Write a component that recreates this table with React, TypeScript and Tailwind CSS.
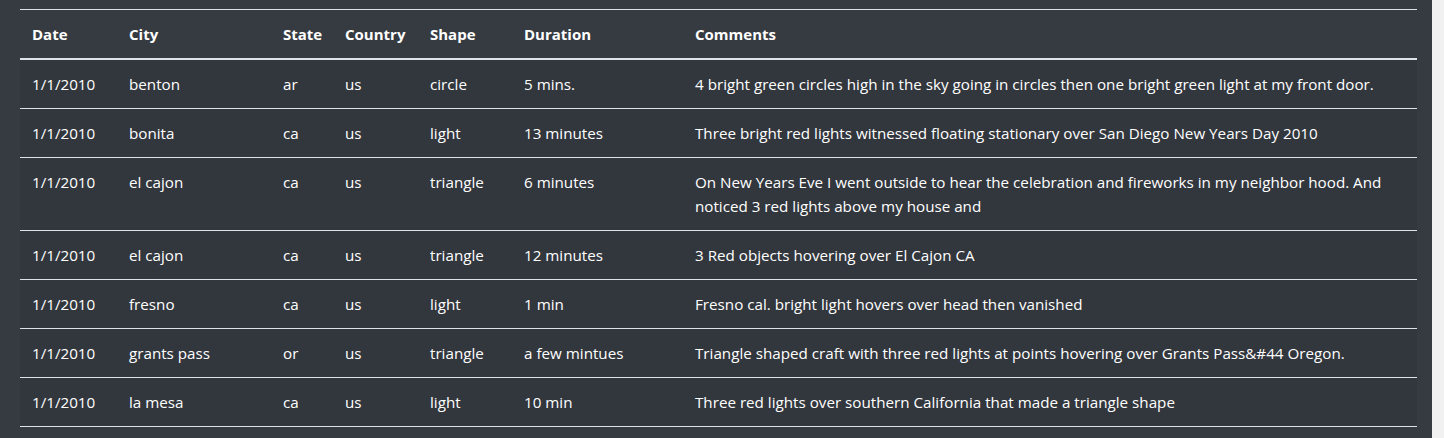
import React from "react";

type Sighting = {
  date: string;
  city: string;
  state: string;
  country: string;
  shape: string;
  duration: string;
  comments: React.ReactNode;
};

const rows: Sighting[] = [
  {
    date: "1/1/2010",
    city: "benton",
    state: "ar",
    country: "us",
    shape: "circle",
    duration: "5 mins.",
    comments:
      "4 bright green circles high in the sky going in circles then one bright green light at my front door.",
  },
  {
    date: "1/1/2010",
    city: "bonita",
    state: "ca",
    country: "us",
    shape: "light",
    duration: "13 minutes",
    comments:
      "Three bright red lights witnessed floating stationary over San Diego New Years Day 2010",
  },
  {
    date: "1/1/2010",
    city: "el cajon",
    state: "ca",
    country: "us",
    shape: "triangle",
    duration: "6 minutes",
    comments: (
      <>
        <span className="whitespace-nowrap">
          On New Years Eve I went outside to hear the celebration and fireworks in my neighbor hood. And
        </span>
        <br />
        noticed 3 red lights above my house and
      </>
    ),
  },
  {
    date: "1/1/2010",
    city: "el cajon",
    state: "ca",
    country: "us",
    shape: "triangle",
    duration: "12 minutes",
    comments: "3 Red objects hovering over El Cajon CA",
  },
  {
    date: "1/1/2010",
    city: "fresno",
    state: "ca",
    country: "us",
    shape: "light",
    duration: "1 min",
    comments: "Fresno cal. bright light hovers over head then vanished",
  },
  {
    date: "1/1/2010",
    city: "grants pass",
    state: "or",
    country: "us",
    shape: "triangle",
    duration: "a few mintues",
    comments:
      "Triangle shaped craft with three red lights at points hovering over Grants Pass&#44 Oregon.",
  },
  {
    date: "1/1/2010",
    city: "la mesa",
    state: "ca",
    country: "us",
    shape: "light",
    duration: "10 min",
    comments: "Three red lights over southern California that made a triangle shape",
  },
];

const headers = ["Date", "City", "State", "Country", "Shape", "Duration", "Comments"];
const widths = ["w-[97px]", "w-[154px]", "w-[62px]", "w-[85px]", "w-[94px]", "w-[171px]", "w-[734px]"];

export default function App() {
  return (
    <div
      className="flex h-[438px] w-[1444px] overflow-hidden bg-[#363a41] text-white"
      style={{ fontFamily: '"Open Sans", "Noto Sans", sans-serif' }}
    >
      <div className="flex-1 pl-[20px] pt-[9px]">
        <table className="w-[1397px] table-fixed border-collapse text-[15.2px] leading-6">
          <colgroup>
            {widths.map((w, i) => (
              <col key={i} className={w} />
            ))}
          </colgroup>
          <thead>
            <tr className="border-t border-b-2 border-t-[#dee2e6] border-b-[#dee2e6]">
              {headers.map((h) => (
                <th key={h} className="px-3 py-3 text-left text-[15px] font-bold">
                  {h}
                </th>
              ))}
            </tr>
          </thead>
          <tbody>
            {rows.map((r, i) => (
              <tr key={i} className="border-b border-[#dee2e6] bg-[#32363d] align-top">
                <td className="px-3 py-3 whitespace-nowrap">{r.date}</td>
                <td className="px-3 py-3 whitespace-nowrap">{r.city}</td>
                <td className="px-3 py-3">{r.state}</td>
                <td className="px-3 py-3">{r.country}</td>
                <td className="px-3 py-3">{r.shape}</td>
                <td className="px-3 py-3 whitespace-nowrap">{r.duration}</td>
                <td className="px-3 py-3">{r.comments}</td>
              </tr>
            ))}
          </tbody>
        </table>
      </div>
      <div className="w-[12px] bg-[#f1f1f1]" />
    </div>
  );
}
